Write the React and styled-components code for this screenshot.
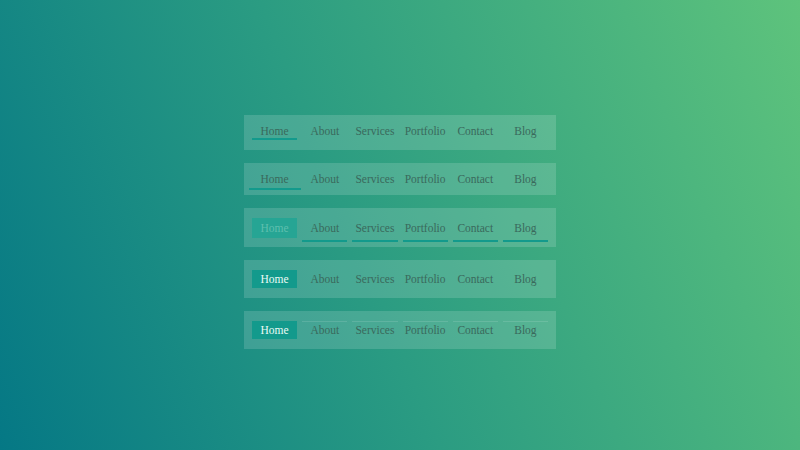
import React from "react";
import styled, { createGlobalStyle, css } from "styled-components";

const GlobalStyle = createGlobalStyle`
  html, body {
    margin: 0;
    padding: 0;
    height: 100%;
  }
  body {
    font-family: "Liberation Serif", "Times New Roman", serif;
    overflow: hidden;
  }
`;

const LINKS = ["Home", "About", "Services", "Portfolio", "Contact", "Blog"];

const TEAL = "#139a8c";
const INK = "#3a695c";

const Page = styled.div`
  width: 800px;
  height: 450px;
  box-sizing: border-box;
  padding-top: 115px;
  display: flex;
  flex-direction: column;
  align-items: center;
  gap: 13px;
  background: linear-gradient(68deg, #057885 0%, #2b9c82 45%, #5ec37c 100%);
`;

const Nav = styled.nav`
  width: 312px;
  box-sizing: border-box;
  display: flex;
  gap: 5px;
  padding: ${(p) => p.$pad};
  background: rgba(255, 255, 255, 0.15);
`;

const Item = styled.a`
  flex: 1;
  display: block;
  text-align: center;
  font-size: 11.5px;
  color: ${INK};
  text-decoration: none;
  white-space: nowrap;
`;

/* 1: underline only under active */
const UnderItem = styled(Item)`
  line-height: 14px;
  border-bottom: 2px solid ${(p) => (p.$active ? TEAL : "transparent")};
`;

/* 2: wider underline under active */
const WideItem = styled(Item)`
  line-height: 14px;
  &::after {
    content: "";
    display: block;
    height: 2px;
    margin: 2px -3.5px 0;
    background: ${(p) => (p.$active ? TEAL : "transparent")};
  }
`;

/* 3: soft box on active, underline on rest */
const SoftItem = styled(Item)`
  line-height: 20px;
  & > span {
    display: block;
    background: ${(p) => (p.$active ? "#26a594" : "transparent")};
    color: ${(p) => (p.$active ? "#5ebfae" : INK)};
  }
  &::after {
    content: "";
    display: block;
    height: 2px;
    margin-top: 2px;
    background: ${(p) => (p.$active ? "transparent" : TEAL)};
  }
`;

/* 4 & 5: solid pill */
const SolidItem = styled(Item)`
  line-height: 18px;
  ${(p) =>
    p.$active
      ? css`
          background: ${TEAL};
          color: #eafaf5;
        `
      : css`
          border-top: ${p.$lined ? "1px solid rgba(255,255,255,0.12)" : "none"};
          line-height: ${p.$lined ? "17px" : "18px"};
        `}
`;

const NavOne = () => (
  <Nav $pad="9px 8px 10px">
    {LINKS.map((l, i) => (
      <UnderItem key={l} href="#" $active={i === 0}>
        {l}
      </UnderItem>
    ))}
  </Nav>
);

const NavTwo = () => (
  <Nav $pad="9px 8px 5px">
    {LINKS.map((l, i) => (
      <WideItem key={l} href="#" $active={i === 0}>
        {l}
      </WideItem>
    ))}
  </Nav>
);

const NavThree = () => (
  <Nav $pad="10px 8px 5px">
    {LINKS.map((l, i) => (
      <SoftItem key={l} href="#" $active={i === 0}>
        <span>{l}</span>
      </SoftItem>
    ))}
  </Nav>
);

const NavSolid = ({ lined }) => (
  <Nav $pad="10px 8px">
    {LINKS.map((l, i) => (
      <SolidItem key={l} href="#" $active={i === 0} $lined={lined}>
        {l}
      </SolidItem>
    ))}
  </Nav>
);

export default function App() {
  return (
    <>
      <GlobalStyle />
      <Page>
        <NavOne />
        <NavTwo />
        <NavThree />
        <NavSolid />
        <NavSolid lined />
      </Page>
    </>
  );
}
